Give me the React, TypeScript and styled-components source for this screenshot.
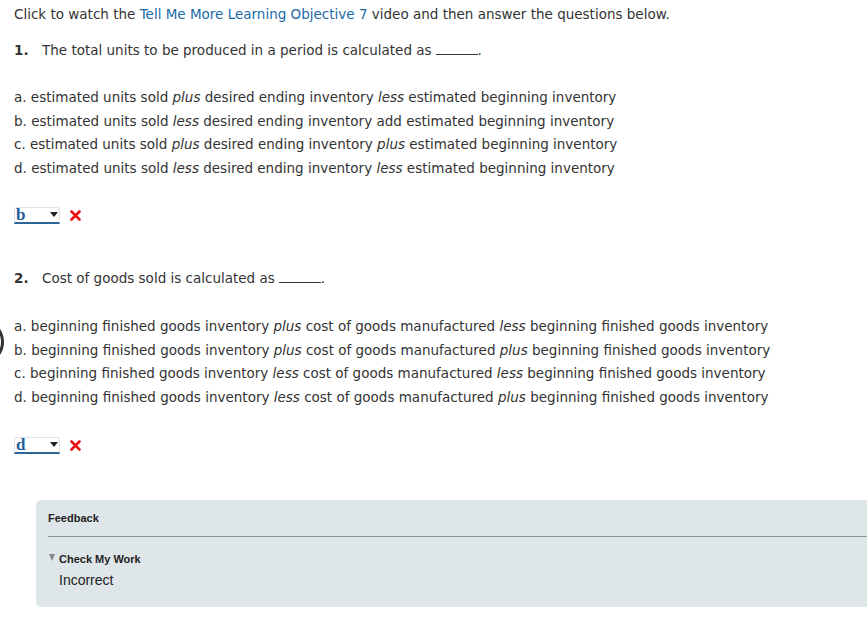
import React from "react";
import styled, { createGlobalStyle } from "styled-components";

const Global = createGlobalStyle`
  html, body { margin: 0; padding: 0; background: #fff; overflow-x: hidden; }
  body { font-family: "DejaVu Sans", Verdana, sans-serif; color: #333; }
`;

const Page = styled.div`
  position: relative;
  padding: 4px 0 16px 14px;
  font-size: 13.5px;
`;

const Intro = styled.p`
  margin: 0;
  line-height: 20px;
`;

const Link = styled.a`
  color: #1a6aa8;
  text-decoration: none;
`;

const Question = styled.div<{ $top: number }>`
  display: flex;
  margin-top: ${(p) => p.$top}px;
  line-height: 20px;
`;

const Num = styled.span`
  width: 28px;
  font-weight: bold;
`;

const Blank = styled.span`
  display: inline-block;
  width: 42px;
  height: 14px;
  margin-left: 4px;
  border-bottom: 1px solid #333;
  vertical-align: baseline;
`;

const Options = styled.div<{ $top: number }>`
  margin-top: ${(p) => p.$top}px;
  line-height: 23.5px;
`;

const Option = styled.div`
  white-space: nowrap;
`;

const AnswerRow = styled.div<{ $top: number }>`
  display: flex;
  align-items: center;
  gap: 10px;
  margin-top: ${(p) => p.$top}px;
  height: 17px;
`;

const Select = styled.div`
  position: relative;
  box-sizing: border-box;
  width: 46px;
  height: 17px;
  background: #fff;
  border: 1px solid #e2e2e2;
  border-bottom: 2px solid #2a6496;
  border-radius: 3px 3px 0 0;
  font-family: "Liberation Serif", "Times New Roman", serif;
  font-weight: bold;
  font-size: 17px;
  line-height: 14px;
  color: #1f5d99;
  padding-left: 1px;
`;

const Caret = styled.span`
  position: absolute;
  right: 1px;
  top: 4px;
  width: 0;
  height: 0;
  border-left: 4px solid transparent;
  border-right: 4px solid transparent;
  border-top: 5px solid #222;
`;

const Edge = styled.div`
  position: absolute;
  left: -26px;
  top: 323px;
  width: 24px;
  height: 32px;
  border-radius: 50%;
  border: 3px solid #333;
`;

const Feedback = styled.div`
  margin: 46px -20px 0 22px;
  height: 107px;
  background: #dfe6e9;
  border-radius: 5px;
  padding: 11px 0 0 12px;
  box-sizing: border-box;
  font-family: "Liberation Sans", Arial, sans-serif;
  color: #222;
`;

const FeedbackTitle = styled.div`
  font-size: 11px;
  font-weight: bold;
  line-height: 14px;
  padding-bottom: 11px;
  border-bottom: 1px solid #8c9396;
`;

const CheckHead = styled.div`
  display: flex;
  align-items: center;
  gap: 4px;
  margin-top: 15px;
  font-size: 11px;
  font-weight: bold;
  line-height: 14px;
  padding-left: 1px;
`;

const Tri = styled.span`
  width: 0;
  height: 0;
  border-left: 3px solid transparent;
  border-right: 3px solid transparent;
  border-top: 7px solid #888;
  margin-top: -3px;
`;

const Result = styled.div`
  font-size: 14px;
  line-height: 18px;
  margin: 5px 0 0 11px;
`;

function Cross() {
  return (
    <svg width="11" height="11" viewBox="0 0 11 11">
      <path d="M1.5 1.5 L9.5 9.5 M9.5 1.5 L1.5 9.5" stroke="#ee1111" strokeWidth="2.6" strokeLinecap="round" />
    </svg>
  );
}

function Answer({ value, top }: { value: string; top: number }) {
  return (
    <AnswerRow $top={top}>
      <Select>
        {value}
        <Caret />
      </Select>
      <Cross />
    </AnswerRow>
  );
}

export default function App() {
  return (
    <>
      <Global />
      <Page>
        <Edge />
        <Intro>
          Click to watch the <Link href="#">Tell Me More Learning Objective 7</Link> video and then answer the questions below.
        </Intro>
        <Question $top={16}>
          <Num>1.</Num>
          <span>
            The total units to be produced in a period is calculated as<Blank />.
          </span>
        </Question>
        <Options $top={26}>
          <Option>a. estimated units sold <i>plus</i> desired ending inventory <i>less</i> estimated beginning inventory</Option>
          <Option>b. estimated units sold <i>less</i> desired ending inventory add estimated beginning inventory</Option>
          <Option>c. estimated units sold <i>plus</i> desired ending inventory <i>plus</i> estimated beginning inventory</Option>
          <Option>d. estimated units sold <i>less</i> desired ending inventory <i>less</i> estimated beginning inventory</Option>
        </Options>
        <Answer value="b" top={27} />
        <Question $top={44}>
          <Num>2.</Num>
          <span>
            Cost of goods sold is calculated as<Blank />.
          </span>
        </Question>
        <Options $top={27}>
          <Option>a. beginning finished goods inventory <i>plus</i> cost of goods manufactured <i>less</i> beginning finished goods inventory</Option>
          <Option>b. beginning finished goods inventory <i>plus</i> cost of goods manufactured <i>plus</i> beginning finished goods inventory</Option>
          <Option>c. beginning finished goods inventory <i>less</i> cost of goods manufactured <i>less</i> beginning finished goods inventory</Option>
          <Option>d. beginning finished goods inventory <i>less</i> cost of goods manufactured <i>plus</i> beginning finished goods inventory</Option>
        </Options>
        <Answer value="d" top={28} />
        <Feedback>
          <FeedbackTitle>Feedback</FeedbackTitle>
          <CheckHead>
            <Tri />
            Check My Work
          </CheckHead>
          <Result>Incorrect</Result>
        </Feedback>
      </Page>
    </>
  );
}
